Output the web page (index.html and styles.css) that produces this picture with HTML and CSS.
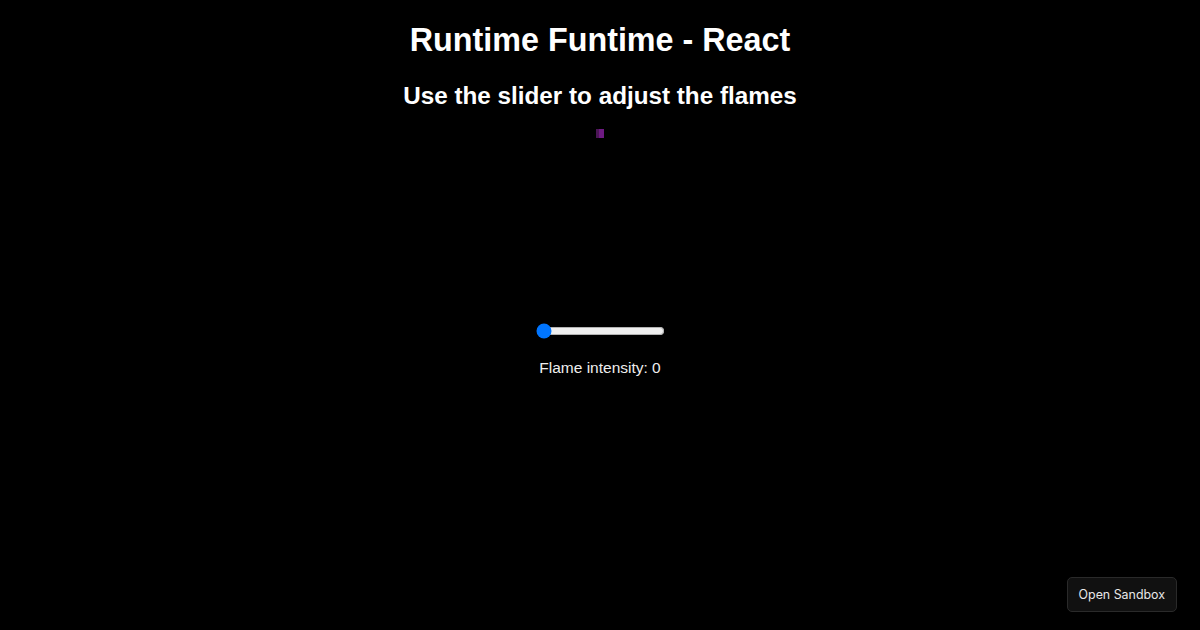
FILE: index.html
```html
<!DOCTYPE html>
<html lang="en">
<head>
    <meta charset="UTF-8">
    <meta name="viewport" content="width=device-width, initial-scale=1.0">
    <title>Runtime Funtime - React</title>
    <link rel="stylesheet" href="styles.css">
</head>
<body>
    <div class="app">
        <h1>Runtime Funtime - React</h1>
        <h2>Use the slider to adjust the flames</h2>

        <!-- Flames -->
        <div class="flame-area">
            <div class="flame">
                <span class="flame-part dark"></span>
                <span class="flame-part bright"></span>
            </div>
        </div>

        <div class="controls">
            <input type="range" class="slider" min="0" max="100" value="0">
            <p class="intensity">Flame intensity: 0</p>
        </div>
    </div>

    <button class="sandbox-btn">Open Sandbox</button>
</body>
</html>
```

FILE: styles.css
```css
body {
    margin: 0;
    background: #000;
    color: #fff;
    font-family: "Liberation Sans", Arial, sans-serif;
}

.app {
    text-align: center;
}

h1 {
    font-size: 32.3px;
    margin: 22px 0 21px;
}

h2 {
    font-size: 24.25px;
    margin: 23px 0 17px;
}

.flame-area {
    height: 191px;
    display: flex;
    justify-content: center;
    padding-top: 2px;
}

.flame {
    display: flex;
    height: 9px;
}

.flame-part {
    display: block;
    height: 9px;
}

.flame-part.dark {
    width: 3px;
    background: #4b1656;
}

.flame-part.bright {
    width: 5px;
    background: #6e1a82;
}

.controls {
    margin-top: 3px;
}

.slider {
    margin: 0;
    width: 129px;
}

.intensity {
    font-size: 15.5px;
    margin: 16px 0;
    color: #eee;
}

.sandbox-btn {
    position: fixed;
    right: 23px;
    bottom: 18px;
    background: #111;
    color: #e8e8e8;
    border: 1px solid #2a2a2a;
    border-radius: 5px;
    padding: 9px 11px;
    font-family: Inter, "Liberation Sans", sans-serif;
    font-size: 12.4px;
    cursor: pointer;
}
```
